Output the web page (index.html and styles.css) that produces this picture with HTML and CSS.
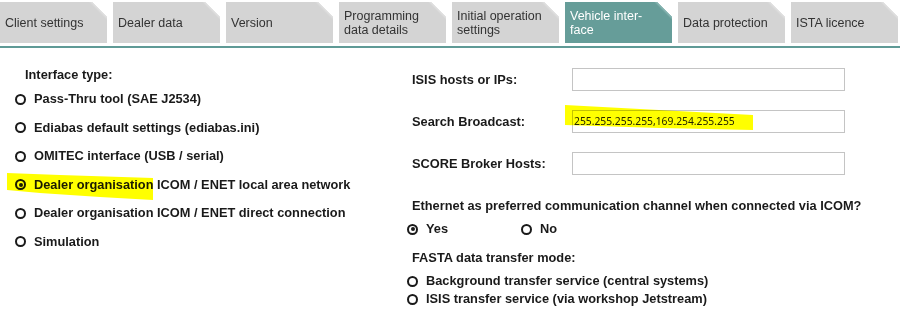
FILE: index.html
```html
<!DOCTYPE html>
<html>
<head>
<meta charset="utf-8">
<link rel="stylesheet" href="styles.css">
</head>
<body>
<nav class="tabs">
  <div class="tab">Client settings</div>
  <div class="tab">Dealer data</div>
  <div class="tab">Version</div>
  <div class="tab">Programming<br>data details</div>
  <div class="tab">Initial operation<br>settings</div>
  <div class="tab active">Vehicle inter-<br>face</div>
  <div class="tab">Data protection</div>
  <div class="tab">ISTA licence</div>
</nav>
<div class="rule"></div>
<main class="content">
  <section class="col-left">
    <div class="heading">Interface type:</div>
    <div class="radio-list">
      <div class="radio"><span class="circle"></span>Pass-Thru tool (SAE J2534)</div>
      <div class="radio"><span class="circle"></span>Ediabas default settings (ediabas.ini)</div>
      <div class="radio"><span class="circle"></span>OMITEC interface (USB / serial)</div>
      <div class="radio"><span class="circle checked"></span>Dealer organisation ICOM / ENET local area network</div>
      <div class="radio"><span class="circle"></span>Dealer organisation ICOM / ENET direct connection</div>
      <div class="radio"><span class="circle"></span>Simulation</div>
    </div>
  </section>
  <section class="col-right">
    <div class="fields">
      <div class="field"><span class="label">ISIS hosts or IPs:</span><span class="input"></span></div>
      <div class="field"><span class="label">Search Broadcast:</span><span class="input">255.255.255.255,169.254.255.255</span></div>
      <div class="field"><span class="label">SCORE Broker Hosts:</span><span class="input"></span></div>
    </div>
    <div class="question">Ethernet as preferred communication channel when connected via ICOM?</div>
    <div class="yesno">
      <div class="radio yes"><span class="circle checked"></span>Yes</div>
      <div class="radio"><span class="circle"></span>No</div>
    </div>
    <div class="question fasta">FASTA data transfer mode:</div>
    <div class="radio bg"><span class="circle"></span>Background transfer service (central systems)</div>
    <div class="radio isis"><span class="circle"></span>ISIS transfer service (via workshop Jetstream)</div>
  </section>
</main>
<svg class="marker" width="900" height="318" viewBox="0 0 900 318">
  <polygon points="7,173 60,175 153,178 153,200 100,197 40,193 7,190" fill="#ffff00"/>
  <polygon points="565,105 640,109 753,115 753,130 660,128 565,125" fill="#ffff00"/>
</svg>
</body>
</html>
```

FILE: styles.css
```css
html, body {
  margin: 0;
  padding: 0;
  background: #ffffff;
}
body {
  position: relative;
  width: 900px;
  height: 318px;
  overflow: hidden;
  font-family: "Liberation Sans", Arial, sans-serif;
  color: #1a1a1a;
}
.tabs {
  display: flex;
  gap: 6px;
  padding-top: 2px;
}
.tab {
  width: 107px;
  height: 41px;
  flex: none;
  box-sizing: border-box;
  padding: 0 5px;
  display: flex;
  align-items: center;
  font-size: 12.5px;
  line-height: 14px;
  color: #333333;
  background: linear-gradient(225deg, #ffffff 0, #ffffff 10px, #e6e6e6 10px, #d4d4d4 13px);
}
.tab.active {
  color: #ffffff;
  background: linear-gradient(225deg, #ffffff 0, #ffffff 10px, #9cc3c0 10px, #669d99 13px);
}
.rule {
  margin-top: 3px;
  height: 2px;
  background: #5f9a96;
}
.content {
  display: flex;
  padding-top: 19px;
  font-size: 12.8px;
  font-weight: bold;
  line-height: 16px;
}
.col-left {
  width: 408px;
  flex: none;
  box-sizing: border-box;
  padding-left: 15px;
}
.heading {
  margin-left: 10px;
}
.radio-list {
  margin-top: 8px;
  display: flex;
  flex-direction: column;
  gap: 12.5px;
}
.radio {
  display: flex;
  align-items: center;
  white-space: nowrap;
}
.circle {
  width: 11px;
  height: 11px;
  box-sizing: border-box;
  border: 2px solid #1a1a1a;
  border-radius: 50%;
  margin-right: 8px;
  flex: none;
  display: flex;
  align-items: center;
  justify-content: center;
}
.circle.checked::after {
  content: "";
  width: 4px;
  height: 4px;
  border-radius: 50%;
  background: #1a1a1a;
}
.col-right {
  flex: 1;
  margin-left: -1px;
}
.fields {
  margin-top: 1px;
  display: flex;
  flex-direction: column;
  gap: 19px;
}
.field {
  display: flex;
  align-items: center;
}
.label {
  width: 165px;
  box-sizing: border-box;
  padding-left: 5px;
  flex: none;
}
.input {
  width: 273px;
  height: 23px;
  box-sizing: border-box;
  border: 1px solid #c4c4c4;
  padding-left: 1px;
  font-family: "Noto Sans", "Liberation Sans", sans-serif;
  font-weight: normal;
  font-size: 10.3px;
  line-height: 20px;
  color: #222222;
}
.question {
  margin-top: 23px;
  padding-left: 5px;
}
.yesno {
  display: flex;
  margin-top: 7px;
}
.yes {
  width: 114px;
}
.fasta {
  margin-top: 13px;
}
.bg {
  margin-top: 7px;
}
.isis {
  margin-top: 2px;
}
.marker {
  position: absolute;
  left: 0;
  top: 0;
  pointer-events: none;
  mix-blend-mode: multiply;
}
```
